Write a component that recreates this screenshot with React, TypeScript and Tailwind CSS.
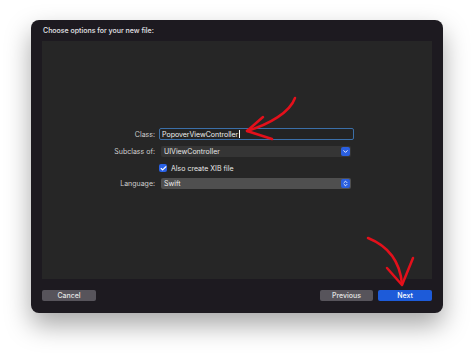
import { Check, ChevronDown, ChevronsUpDown } from "lucide-react"

const font = { fontFamily: "Inter, 'Liberation Sans', sans-serif" }

function Arrows() {
  return (
    <svg className="pointer-events-none absolute left-0 top-0" width="474" height="355" viewBox="0 0 474 355">
      <g fill="none" stroke="#e3101b" strokeWidth="2.5" strokeLinecap="round" strokeLinejoin="round">
        <path d="M295 98 C 290 112, 270 124, 247 131" />
        <path d="M263 117 L 247 131 L 272 139" />
        <path d="M368 238 C 388 246, 400 262, 402 284" />
        <path d="M387 268 L 402 285 L 413 258" />
      </g>
    </svg>
  )
}

export default function App() {
  return (
    <div className="relative h-[355px] w-[474px] overflow-hidden bg-white" style={font}>
      <div className="pl-[31px] pt-[20px]">
        <div className="flex h-[293px] w-[412px] flex-col rounded-[8px] bg-[#1d1a20] px-[11px] shadow-[0_12px_26px_rgba(0,0,0,0.35)]">
          <div className="flex h-[21px] items-center pl-[1px] text-[7px] font-medium leading-none text-[#e6e4e8]">
            Choose options for your new file:
          </div>
          <div className="flex h-[238px] flex-col bg-[#262626] pt-[87px]">
            <div className="grid grid-cols-[113px_1fr] items-center gap-x-[4px] gap-y-[6px] pr-[78px] text-[7px] leading-none text-[#cfcfcf]">
              <span className="text-right">Class:</span>
              <div className="flex h-[12px] items-center rounded-[2px] border border-[#3b6fa8] bg-[#232323] pl-[2px] text-[#f0f0f0]">
                PopoverViewController<span className="ml-[0.5px] h-[8px] w-px bg-white" />
              </div>
              <span className="text-right">Subclass of:</span>
              <div className="ml-[2px] mr-[3px] flex h-[11px] items-center justify-between rounded-[2px] bg-[#353535] pl-[3px] text-[#e6e6e6]">
                UIViewController
                <span className="mr-[1px] flex h-[9px] w-[9px] items-center justify-center rounded-[2px] bg-[#2a5fe0]">
                  <ChevronDown size={7} color="#fff" strokeWidth={3} />
                </span>
              </div>
              <span />
              <div className="mt-[1px] flex h-[8px] items-center gap-[4px]">
                <span className="flex h-[8px] w-[8px] items-center justify-center rounded-[2px] bg-[#2a62e6]">
                  <Check size={7} color="#fff" strokeWidth={4} />
                </span>
                <span className="text-[#e6e6e6]">Also create XIB file</span>
              </div>
              <span className="text-right">Language:</span>
              <div className="ml-[2px] mr-[3px] flex h-[11px] items-center justify-between rounded-[2px] bg-[#4f4f4f] pl-[3px] text-[#ececec]">
                Swift
                <span className="mr-[1px] flex h-[9px] w-[9px] items-center justify-center rounded-[2px] bg-[#2a5fe0]">
                  <ChevronsUpDown size={7} color="#fff" strokeWidth={3} />
                </span>
              </div>
            </div>
          </div>
          <div className="flex flex-1 items-center justify-between pb-[1px] text-[7px] font-medium leading-none">
            <button className="h-[11px] w-[54px] rounded-[2px] bg-[#57545b] text-[#e4e4e4]">Cancel</button>
            <div className="flex gap-[5px]">
              <button className="h-[11px] w-[53px] rounded-[2px] bg-[#57545b] text-[#e4e4e4]">Previous</button>
              <button className="h-[11px] w-[54px] rounded-[2px] bg-[#1d5bd9] text-white">Next</button>
            </div>
          </div>
        </div>
      </div>
      <Arrows />
    </div>
  )
}
